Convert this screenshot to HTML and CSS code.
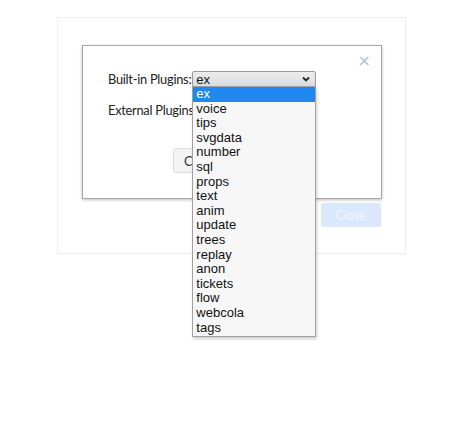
FILE: index.html
```html
<!DOCTYPE html>
<html>
<head>
<meta charset="utf-8">
<link rel="stylesheet" href="styles.css">
</head>
<body>
<div class="panel">
  <div class="dialog">
    <span class="close-x">×</span>
    <div class="row">
      <label class="lbl">Built-in Plugins:</label>
      <div class="select-wrap">
        <div class="select"><span>ex</span>
          <svg class="chev" width="8" height="6" viewBox="0 0 8 6"><path d="M1 1.5 L4 4.5 L7 1.5" fill="none" stroke="#222" stroke-width="1.8"/></svg>
        </div>
        <ul class="menu">
          <li class="sel">ex</li>
          <li>voice</li>
          <li>tips</li>
          <li>svgdata</li>
          <li>number</li>
          <li>sql</li>
          <li>props</li>
          <li>text</li>
          <li>anim</li>
          <li>update</li>
          <li>trees</li>
          <li>replay</li>
          <li>anon</li>
          <li>tickets</li>
          <li>flow</li>
          <li>webcola</li>
          <li>tags</li>
        </ul>
      </div>
    </div>
    <div class="row row2">
      <label class="lbl">External Plugins:</label>
    </div>
    <div class="foot">
      <button class="btn-cancel"><span>C</span></button>
    </div>
  </div>
  <div class="actions">
    <button class="btn-close">Close</button>
  </div>
</div>
</body>
</html>
```
FILE: styles.css
```css
html, body {
  margin: 0;
  background: #fff;
}
body {
  box-sizing: border-box;
  min-height: 434px;
  padding: 17px 0 0 57px;
  font-family: "Lato", sans-serif;
}
.panel {
  box-sizing: border-box;
  width: 349px;
  height: 237px;
  border: 1px solid #eeeeee;
  padding: 27px 24px 0 24px;
}
.dialog {
  position: relative;
  box-sizing: border-box;
  width: 300px;
  height: 154px;
  border: 1px solid #a8a8a8;
  box-shadow: 0 1px 3px rgba(0,0,0,0.25);
  background: #fff;
  padding: 25px 0 0 25px;
}
.close-x {
  position: absolute;
  right: 10px;
  top: 5px;
  font-size: 16px;
  color: #b4c0cc;
  font-family: "DejaVu Sans", sans-serif;
}
.row {
  display: flex;
  align-items: center;
  height: 16px;
}
.row2 {
  margin-top: 15px;
}
.lbl {
  font-size: 12.8px;
  letter-spacing: -0.25px;
  color: #222;
  margin-right: 1px;
}
.select-wrap {
  position: relative;
}
.select {
  box-sizing: border-box;
  width: 124px;
  height: 16px;
  border: 1px solid #9a9a9a;
  border-radius: 2px;
  background: linear-gradient(#ececec, #dcdcdc);
  display: flex;
  align-items: center;
  justify-content: space-between;
  padding: 0 5px 0 3px;
  font-family: "Liberation Sans", Arial, sans-serif;
  font-size: 13px;
  color: #111;
}
.menu {
  position: absolute;
  left: 0;
  top: 15px;
  margin: 0;
  padding: 0 0 1px 0;
  list-style: none;
  box-sizing: border-box;
  width: 124px;
  background: #f7f7f7;
  border: 1px solid #a0a0a0;
  box-shadow: 1px 2px 3px rgba(0,0,0,0.2);
  font-family: "Liberation Sans", Arial, sans-serif;
  font-size: 13px;
  color: #111;
  z-index: 5;
}
.menu li {
  height: 14.6px;
  line-height: 14.6px;
  padding-left: 3px;
}
.menu li.sel {
  background: #1e88f0;
  color: #fff;
}
.foot {
  margin-top: 30px;
  padding-left: 65px;
}
.btn-cancel {
  box-sizing: border-box;
  height: 25px;
  width: 40px;
  border: 1px solid #dcdcdc;
  border-radius: 3px;
  background: #f4f4f4;
  color: #333;
  font-family: "Lato", sans-serif;
  font-size: 13px;
  padding: 0 0 0 10px;
  text-align: left;
}
.actions {
  display: flex;
  justify-content: flex-end;
  width: 300px;
  margin-top: 4px;
}
.btn-close {
  box-sizing: border-box;
  width: 60px;
  height: 24px;
  border: none;
  border-radius: 2px;
  background: #dbe7fb;
  color: #f2f6fd;
  font-family: "Lato", sans-serif;
  font-size: 12.5px;
  margin-right: 1px;
}
```
